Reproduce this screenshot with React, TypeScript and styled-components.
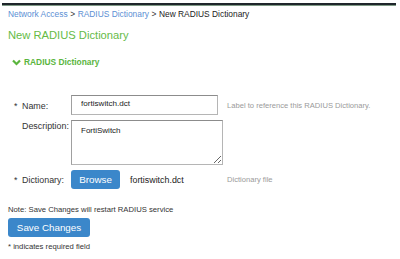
import styled, { createGlobalStyle } from 'styled-components';

const GlobalStyle = createGlobalStyle`
  body {
    margin: 0;
    background: #ffffff;
    font-family: "Liberation Sans", Arial, sans-serif;
    color: #333333;
  }
`;

export default function App() {
  return (
    <Page>
      <GlobalStyle />
      <TopRule />
      <Content>
        <Breadcrumb>
          <Crumb href="#">Network Access</Crumb>
          <Sep>&gt;</Sep>
          <Crumb href="#">RADIUS Dictionary</Crumb>
          <Sep>&gt;</Sep>
          <span>New RADIUS Dictionary</span>
        </Breadcrumb>
        <Title>New RADIUS Dictionary</Title>
        <SectionHeader>
          <svg width="9" height="7" viewBox="0 0 9 7">
            <path d="M1 1.5 L4.5 5 L8 1.5" fill="none" stroke="#5ab53d" strokeWidth="2.2" />
          </svg>
          RADIUS Dictionary
        </SectionHeader>

        <Form>
          <Label>
            <Star>*</Star>Name:
          </Label>
          <TextInput defaultValue="fortiswitch.dct" />
          <Help>Label to reference this RADIUS Dictionary.</Help>

          <Label $top>Description:</Label>
          <TextArea defaultValue="FortiSwitch" />
          <span />

          <Label>
            <Star>*</Star>Dictionary:
          </Label>
          <FileField>
            <Button $width={49}>Browse</Button>
            <FileName>fortiswitch.dct</FileName>
          </FileField>
          <Help>Dictionary file</Help>
        </Form>

        <Note>Note: Save Changes will restart RADIUS service</Note>
        <Button $width={82}>Save Changes</Button>
        <Note $gap={4}>* indicates required field</Note>
      </Content>
    </Page>
  );
}

const Page = styled.div`
  padding: 3px 4px 0 2px;
`;

const TopRule = styled.div`
  height: 2px;
  background: #1f262b;
  border-bottom: 1px solid #7f9a86;
`;

const Content = styled.div`
  padding: 0 6px;
`;

const Breadcrumb = styled.div`
  margin-top: 2px;
  font-size: 8.4px;
  line-height: 12px;
  color: #222222;
  display: flex;
  gap: 2.6px;
`;

const Crumb = styled.a`
  color: #5b8fd4;
  text-decoration: none;
`;

const Sep = styled.span`
  color: #333333;
`;

const Title = styled.div`
  margin-top: 7px;
  font-size: 11.2px;
  line-height: 16px;
  color: #66bb47;
`;

const SectionHeader = styled.div`
  margin-top: 13px;
  padding-left: 4px;
  display: flex;
  align-items: center;
  gap: 3px;
  font-size: 8.4px;
  line-height: 12px;
  font-weight: bold;
  color: #5ab53d;
`;

const Form = styled.div`
  margin-top: 27px;
  margin-left: 6px;
  display: grid;
  grid-template-columns: 57px 156px auto;
  row-gap: 5px;
  align-items: center;
`;

const Label = styled.div<{ $top?: boolean }>`
  align-self: ${(p) => (p.$top ? 'start' : 'center')};
  padding-top: ${(p) => (p.$top ? '0px' : '1px')};
  padding-left: 8px;
  font-size: 8.9px;
  line-height: 12px;
  color: #333333;
  white-space: nowrap;
`;

const Star = styled.span`
  display: inline-block;
  width: 8px;
  margin-left: -8px;
`;

const TextInput = styled.input`
  box-sizing: border-box;
  width: 147px;
  height: 20px;
  margin: 0;
  padding: 0 0 3px 9px;
  border: 1px solid #b5b5b5;
  border-top-color: #8c8c8c;
  border-left-color: #a0a0a0;
  font-family: "Liberation Sans", Arial, sans-serif;
  font-size: 8.1px;
  color: #222222;
  outline: none;
`;

const TextArea = styled.textarea`
  box-sizing: border-box;
  width: 152px;
  height: 45px;
  margin: 0;
  padding: 4px 9px;
  border: 1px solid #b5b5b5;
  border-top-color: #8c8c8c;
  border-left-color: #a0a0a0;
  font-family: "Liberation Sans", Arial, sans-serif;
  font-size: 8px;
  line-height: 12px;
  color: #222222;
  resize: both;
  outline: none;
`;

const Help = styled.div`
  font-size: 7.6px;
  line-height: 11px;
  color: #9a9a9a;
  white-space: nowrap;
`;

const FileField = styled.div`
  display: flex;
  align-items: center;
  gap: 10px;
`;

const Button = styled.button<{ $width: number }>`
  box-sizing: border-box;
  width: ${(p) => p.$width}px;
  height: 19px;
  padding: 0;
  border: none;
  border-radius: 3px;
  background: #3b87ca;
  color: #ffffff;
  font-family: "Liberation Sans", Arial, sans-serif;
  font-size: 9.8px;
  cursor: pointer;
`;

const FileName = styled.span`
  font-size: 8.9px;
  color: #222222;
`;

const Note = styled.div<{ $gap?: number }>`
  margin-top: ${(p) => p.$gap ?? 15}px;
  margin-bottom: 2px;
  font-size: 7.7px;
  line-height: 11px;
  color: #333333;
`;
